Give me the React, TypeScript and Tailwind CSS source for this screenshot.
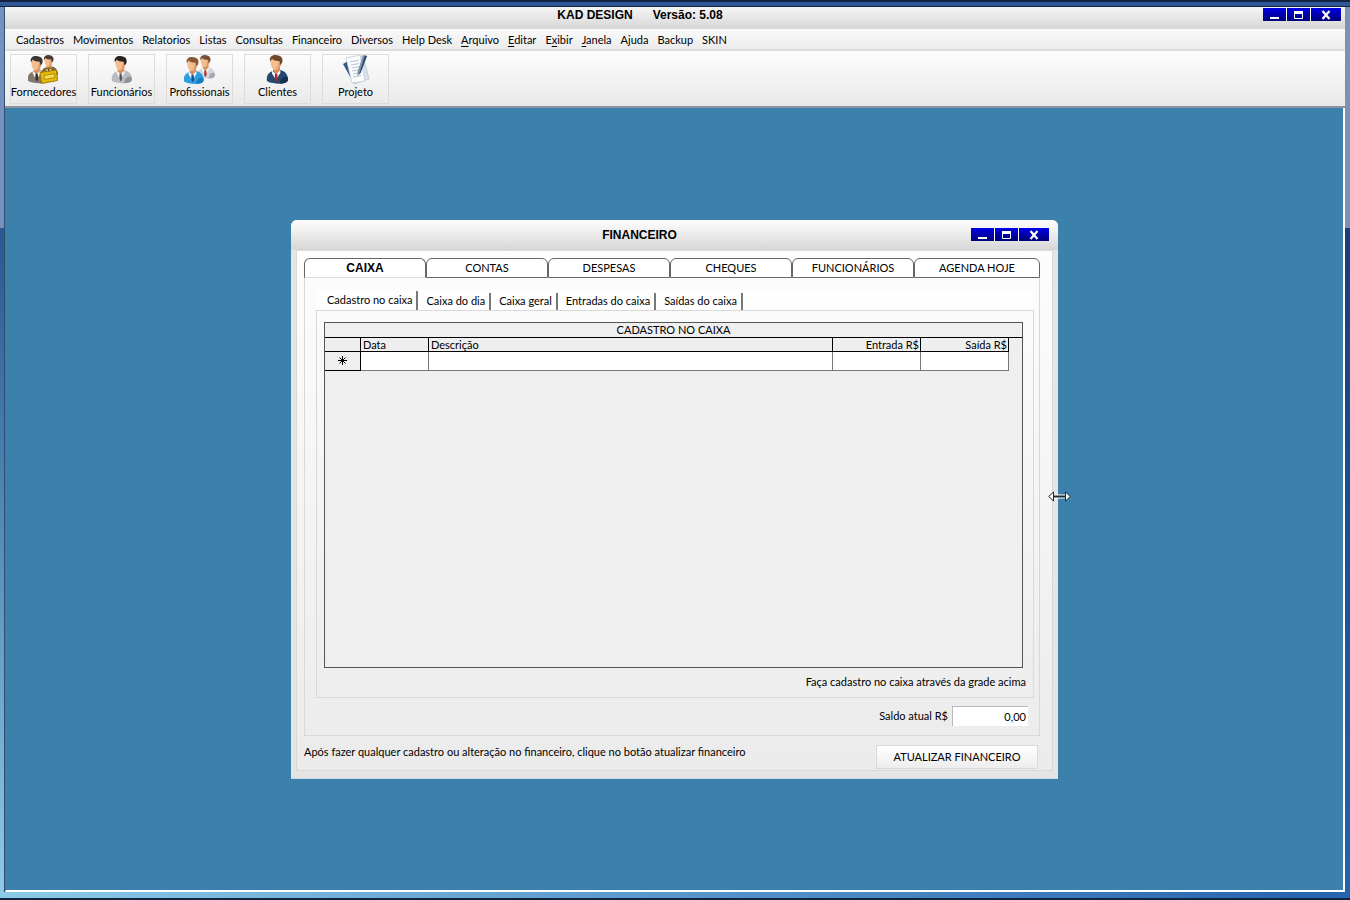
import { useState } from 'react';
import type { ReactNode } from 'react';

// '_' marks the accelerator letter that follows it
const menuItems = [
  'Cadastros',
  'Movimentos',
  'Relatorios',
  'Listas',
  'Consultas',
  'Financeiro',
  'Diversos',
  'Help Desk',
  '_Arquivo',
  '_Editar',
  'E_xibir',
  '_Janela',
  'Ajuda',
  'Backup',
  'SKIN',
];

const mainTabs = ['CAIXA', 'CONTAS', 'DESPESAS', 'CHEQUES', 'FUNCIONÁRIOS', 'AGENDA HOJE'];

const subTabs = ['Cadastro no caixa', 'Caixa do dia', 'Caixa geral', 'Entradas do caixa', 'Saídas do caixa'];

type PersonProps = {
  x?: number;
  y?: number;
  scale?: number;
  hair: string;
  coat: string;
  shade: string;
  tie: string;
};

function Person({ x = 0, y = 0, scale = 1, hair, coat, shade, tie }: PersonProps) {
  return (
    <g transform={`translate(${x} ${y}) scale(${scale})`}>
      <path d="M1 26C0 20 3 17 8 15.500L14 15C19 16 22 19 22 25C21 28 16 29.500 10 28.500C6 28 3 27.500 1 26Z" fill={coat} />
      <path d="M14 28.800C15 23 17 21 21.500 22C22.500 25 22 27 19 28Z" fill={shade} />
      <path d="M6 15.500L10 19L14 14.500L14.500 17.500L10 25L6 18.500Z" fill="#f6f6f6" />
      <path d="M9 18.500L11.200 18.500L11.800 24L10.200 27L8.800 24Z" fill={tie} />
      <path d="M7 11L14 11L14 15.500L10 19L7 15.500Z" fill="#d88f5c" />
      <path d="M4.500 6C4.500 2.500 7 1.500 10 1.500C13.500 1.500 15.500 4 15 8C14.500 13 12 15.500 9 15C6 14.500 4.500 10 4.500 6Z" fill="#f4bd90" />
      <path d="M11 14.500C14 13 15.500 10 15 5L12.500 7C12.500 10 12 13 9.500 15Z" fill="#dc965f" />
      <path d="M4 6C3 1.500 7-.5 11 .2C15.500 .5 17.500 3.500 16 8L14.500 10L13.500 6C10.500 6 7 5.500 6 3.500C5.500 5 5 6 4 6Z" fill={hair} />
    </g>
  );
}

function SuppliersIcon() {
  return (
    <svg viewBox="0 0 32 30" className="h-[30px] w-8" aria-hidden="true">
      <Person x={13} y={0} scale={0.76} hair="#4a3a30" coat="#6c665e" shade="#4a443e" tie="#7a2c22" />
      <Person x={-1} y={1} scale={0.95} hair="#363636" coat="#84786c" shade="#5c544c" tie="#33292a" />
      <path d="M16 17L17 14L24 13L26 15.500" fill="none" stroke="#8d6b00" strokeWidth="1.500" />
      <path d="M12 17.500L28.500 15L29.500 25.500L13.500 28.500Z" fill="#e4b90c" stroke="#a47c00" />
      <path d="M16 20.500L26.500 18.800L27 22.500L16.500 24.500Z" fill="#f8dd5a" stroke="#b58f08" />
    </svg>
  );
}

function EmployeesIcon() {
  return (
    <svg viewBox="0 0 32 30" className="h-[30px] w-8" aria-hidden="true">
      <Person x={5} y={1} scale={0.95} hair="#25221f" coat="#b9bcc0" shade="#8e9196" tie="#565a60" />
    </svg>
  );
}

function ProfessionalsIcon() {
  return (
    <svg viewBox="0 0 32 30" className="h-[30px] w-8" aria-hidden="true">
      <Person x={13} y={0} scale={0.82} hair="#755038" coat="#d3d5dc" shade="#a5a8b4" tie="#b02828" />
      <Person x={-1} y={2} scale={0.94} hair="#8a5730" coat="#2c9fe0" shade="#147fc4" tie="#174f8e" />
    </svg>
  );
}

function ClientsIcon() {
  return (
    <svg viewBox="0 0 32 30" className="h-[30px] w-8" aria-hidden="true">
      <Person x={4} y={0} scale={1} hair="#70462a" coat="#24496f" shade="#14304f" tie="#b8232b" />
    </svg>
  );
}

function ProjectIcon() {
  return (
    <svg viewBox="0 0 32 30" className="h-[30px] w-8" aria-hidden="true">
      <path d="M3 9L8 6L15 26L13.500 28Z" fill="#37588a" />
      <path d="M7 3L23 1L29 24L14 29Z" fill="#dde3ec" stroke="#b3bccb" strokeWidth=".7" />
      <path d="M6 3L20 0L25 26L12 28Z" fill="#fbfcfe" stroke="#bcc5d2" strokeWidth=".7" />
      <path d="M10 7L19 5M11 10L19 8.500M11.500 13L20 11.500M12 16L20 14.500M13 19L21 17.500M13 22L21 20.500" stroke="#aab4c4" strokeWidth=".8" />
      <path d="M23 0L27 1L20.500 18L17.500 21L17.500 17Z" fill="#7c90ac" />
      <path d="M25 .5L27 1L20.500 18L19 19.500Z" fill="#2c4468" />
    </svg>
  );
}

const shortcuts = [
  { label: 'Fornecedores', icon: <SuppliersIcon /> },
  { label: 'Funcionários', icon: <EmployeesIcon /> },
  { label: 'Profissionais', icon: <ProfessionalsIcon /> },
  { label: 'Clientes', icon: <ClientsIcon /> },
  { label: 'Projeto', icon: <ProjectIcon /> },
];

function MenuLabel({ text }: { text: string }) {
  const at = text.indexOf('_');
  if (at < 0) return <>{text}</>;
  return (
    <>
      {text.slice(0, at)}
      <span className="underline underline-offset-2">{text[at + 1]}</span>
      {text.slice(at + 2)}
    </>
  );
}

function CaptionButton({ label, wide, children }: { label: string; wide?: boolean; children: ReactNode }) {
  return (
    <button
      type="button"
      aria-label={label}
      className={`flex h-[13px] items-center justify-center bg-linear-to-b from-[#0000e8] to-[#000078] ${wide ? 'w-[30px]' : 'w-[23px]'}`}
    >
      <svg viewBox="0 0 10 10" className="h-[10px] w-[10px]" fill="none" stroke="#fff" aria-hidden="true">
        {children}
      </svg>
    </button>
  );
}

function CaptionButtons() {
  return (
    <div className="flex gap-px bg-white">
      <CaptionButton label="Minimizar">
        <path d="M0 8H9" strokeWidth="2" />
      </CaptionButton>
      <CaptionButton label="Maximizar">
        <path d="M.5 2V8.500H8.500V2" />
        <path d="M0 2.500H9" strokeWidth="3" />
      </CaptionButton>
      <CaptionButton label="Fechar" wide>
        <path d="M1.500 1L8.500 9M8.500 1L1.500 9" strokeWidth="2.200" />
      </CaptionButton>
    </div>
  );
}

function CashGrid() {
  return (
    <div className="min-h-[346px] border border-[#555] bg-[#efefef]">
      <div id="grid-title" className="h-[15px] border-b border-black text-center leading-[14px]">
        CADASTRO NO CAIXA
      </div>
      <div className="pr-[13px]">
        <table aria-labelledby="grid-title" className="w-full table-fixed border-separate border-spacing-0">
          <thead>
            <tr className="h-[14px] leading-[13px]">
              <th className="w-9 border-r border-b border-black p-0" aria-label="Seletor" />
              <th className="w-[68px] border-r border-b border-black p-0 pl-0.5 text-left font-normal">Data</th>
              <th className="border-r border-b border-black p-0 pl-0.5 text-left font-normal">Descrição</th>
              <th className="w-[88px] border-r border-b border-black p-0 pr-px text-right font-normal">Entrada R$</th>
              <th className="w-[88px] border-r border-b border-black p-0 pr-px text-right font-normal">Saída R$</th>
            </tr>
          </thead>
          <tbody>
            <tr className="h-[19px]">
              <td className="border-r border-b border-black p-0">
                <svg viewBox="0 0 9 9" className="mx-auto h-[9px] w-[9px]" stroke="#000" aria-hidden="true">
                  <path d="M4.500 0V9M0 4.500H9M1.500 1.500L7.500 7.500M7.500 1.500L1.500 7.500" />
                </svg>
              </td>
              {['Data', 'Descrição', 'Entrada R$', 'Saída R$'].map((name) => (
                <td key={name} className="border-r border-b border-[#777] bg-white p-0">
                  <input type="text" aria-label={name} className="block h-[18px] w-full bg-white px-0.5 outline-none" />
                </td>
              ))}
            </tr>
          </tbody>
        </table>
      </div>
    </div>
  );
}

function FinanceWindow() {
  const [tab, setTab] = useState(0);
  const [subTab, setSubTab] = useState(0);
  const [balance, setBalance] = useState('0,00');

  return (
    <section
      aria-label="Financeiro"
      className="relative w-[767px] max-w-full rounded-t-[6px] border-b border-[#c3dae2] bg-[#e6e5e6]"
    >
      <header className="flex h-[30px] items-center rounded-t-[6px] bg-linear-to-b from-white to-[#d6d6d6] pr-[9px] pl-[17px]">
        <h2 className="flex-1 text-center font-['Liberation_Sans',Arial,sans-serif] text-xs font-bold">FINANCEIRO</h2>
        <CaptionButtons />
      </header>

      <div className="px-[5px] pb-[7px]">
        <div className="border border-[#d9d9dc] bg-linear-to-b from-[#fdfdfd] to-[#ebebeb] pt-[7px] pr-3 pl-[7px]">
          <div role="tablist" className="flex">
            {mainTabs.map((name, index) => (
              <button
                key={name}
                type="button"
                role="tab"
                aria-selected={index === tab}
                onClick={() => setTab(index)}
                className={`h-5 w-[122px] rounded-t-[6px] border border-[#666] bg-white pt-px text-center last:flex-1 ${
                  index === tab ? "border-b-[#dcdcdc] font-['Liberation_Sans',Arial,sans-serif] text-xs font-bold" : ''
                }`}
              >
                {name}
              </button>
            ))}
          </div>

          <div className="border-x border-b border-[#d8d8d8] pt-3 pr-[5px] pl-[11px]">
            <div role="tablist" className="flex h-5 items-end bg-[#fefefe] pl-[3px]">
              {subTabs.map((name, index) => (
                <button
                  key={name}
                  type="button"
                  role="tab"
                  aria-selected={index === subTab}
                  onClick={() => setSubTab(index)}
                  className={`border-r-2 border-[#777] pr-1 pl-2 ${index === subTab ? 'h-[19px]' : 'h-[17px]'}`}
                >
                  {name}
                </button>
              ))}
            </div>
            <div className="border border-[#d8d8d8] pt-[11px] pr-[10px] pl-[7px]">
              <CashGrid />
              <p className="-mr-[3px] flex h-[29px] items-center justify-end">Faça cadastro no caixa através da grade acima</p>
            </div>

            <div className="flex h-[37px] items-center justify-end gap-1 pr-[6px]">
              <label htmlFor="saldo">Saldo atual R$</label>
              <input
                id="saldo"
                type="text"
                value={balance}
                onChange={(e) => setBalance(e.target.value)}
                className="h-5 w-[76px] border-t border-l border-[#b8b8b8] bg-white pr-0.5 text-right outline-none"
              />
            </div>
          </div>

          <div className="flex h-[34px] items-center justify-between pr-0.5">
            <p>Após fazer qualquer cadastro ou alteração no financeiro, clique no botão atualizar financeiro</p>
            <button
              type="button"
              className="mt-2 h-6 w-[162px] border border-[#d9d9d9] bg-linear-to-b from-white to-[#ededed] pt-px"
            >
              ATUALIZAR FINANCEIRO
            </button>
          </div>
        </div>
      </div>

      {/* horizontal resize pointer on the right edge */}
      <svg viewBox="0 0 23 11" className="absolute top-[271px] -right-[13px] h-[11px] w-[23px]" aria-hidden="true">
        <path d="M4 5.500H19" stroke="#fff" strokeWidth="4" />
        <path d="M.7 5.500L5.500 1V10ZM22.300 5.500L17.500 1V10Z" fill="#fff" stroke="#1b2a33" strokeLinejoin="round" />
        <path d="M5 5.500H18" stroke="#1b2a33" strokeWidth="2" />
      </svg>
    </section>
  );
}

export default function App() {
  return (
    <div className="flex h-screen flex-col font-[Lato,'Liberation_Sans',sans-serif] text-[11px] text-black">
      <div className="h-[7px] shrink-0 border-t-2 border-b border-[#14233f] bg-[#2d5795]" />

      <div className="flex min-h-0 flex-1">
        <div className="w-[5px] shrink-0 border-r border-[#31506f] bg-linear-to-b from-[#7591c0] from-25% via-[#2a5793] via-25% to-[#8ccbe6]" />

        <div className="flex min-w-0 flex-1 flex-col">
          <header className="flex h-[22px] shrink-0 items-start bg-linear-to-b from-[#f6f6f6] to-[#d6d6d6] pt-px pr-1 pl-3">
            <h1 className="flex flex-1 justify-center gap-5 font-['Liberation_Sans',Arial,sans-serif] text-xs leading-[14px] font-bold">
              <span>KAD DESIGN</span>
              <span>Versão: 5.08</span>
            </h1>
            <CaptionButtons />
          </header>

          <nav className="flex h-[22px] shrink-0 items-center gap-[9px] border-b-2 border-[#dcdcdc] bg-linear-to-b from-[#fafafa] to-[#ececec] px-[11px] pt-0.5">
            {menuItems.map((item) => (
              <button key={item} type="button">
                <MenuLabel text={item} />
              </button>
            ))}
          </nav>

          <div className="flex h-[57px] shrink-0 gap-[11px] border-b-2 border-[#8c93a0] bg-linear-to-b from-[#fdfdfd] to-[#e9e9e9] px-[5px] pt-[3px]">
            {shortcuts.map((item) => (
              <button
                key={item.label}
                type="button"
                className="flex h-[50px] w-[67px] flex-col items-center border border-[#dcdcdc] leading-[14px] whitespace-nowrap"
              >
                {item.icon}
                {item.label}
              </button>
            ))}
          </div>

          <main className="flex min-h-0 flex-1 items-center justify-center border-r-2 border-b-2 border-l border-white border-l-[#5c7088] bg-[#3c81ab]">
            <FinanceWindow />
          </main>
        </div>

        <div className="w-[5px] shrink-0 bg-linear-to-b from-[#7d92b2] from-25% via-[#173f78] via-25% to-[#2463ae]" />
      </div>

      <div className="h-2 shrink-0 border-b-2 border-[#10243f] bg-linear-to-r from-[#8ccbe6] to-[#2463ae]" />
    </div>
  );
}
